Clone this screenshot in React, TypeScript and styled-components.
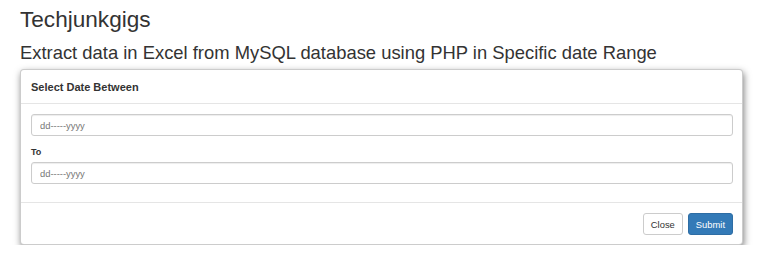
import styled, { createGlobalStyle } from 'styled-components';

const GlobalStyle = createGlobalStyle`
  html, body {
    margin: 0;
    padding: 0;
    background: #fff;
    font-family: "Liberation Sans", Arial, sans-serif;
    color: #333;
  }
`;

const Page = styled.div`
  padding: 6px 25px 0 20px;
`;

const Title = styled.h1`
  margin: 0;
  font-size: 22.6px;
  font-weight: 400;
  line-height: 28px;
`;

const Subtitle = styled.h2`
  margin: 7px 0 0;
  font-size: 18.4px;
  font-weight: 400;
  line-height: 24px;
`;

const Modal = styled.div`
  margin-top: 4px;
  border: 1px solid rgba(0, 0, 0, 0.2);
  border-radius: 4px;
  background: #fff;
  box-shadow: 1px 3px 7px rgba(0, 0, 0, 0.5);
`;

const Header = styled.div`
  height: 34px;
  padding: 0 10px;
  display: flex;
  align-items: center;
  border-bottom: 1px solid #e5e5e5;
  box-sizing: border-box;
`;

const HeaderTitle = styled.h4`
  margin: 0;
  font-size: 11px;
  font-weight: 700;
`;

const Body = styled.div`
  padding: 10px 9px 18px 10px;
`;

const Field = styled.input`
  display: block;
  width: 100%;
  height: 22px;
  box-sizing: border-box;
  padding: 0 8px;
  border: 1px solid #ccc;
  border-radius: 3px;
  font-family: inherit;
  font-size: 9.4px;
  color: #555;
  box-shadow: inset 0 1px 1px rgba(0, 0, 0, 0.075);
  outline: none;
  &::placeholder {
    color: #777;
  }
`;

const Label = styled.label`
  display: block;
  margin: 11px 0 5px;
  font-size: 9px;
  font-weight: 700;
  line-height: 10px;
`;

const Footer = styled.div`
  padding: 10px 9px 9px;
  display: flex;
  justify-content: flex-end;
  gap: 5px;
  border-top: 1px solid #e5e5e5;
`;

const Button = styled.button<{ $primary?: boolean }>`
  height: 22px;
  padding: 0 7px;
  border-radius: 3px;
  font-family: inherit;
  font-size: 9.4px;
  cursor: pointer;
  border: 1px solid ${(p) => (p.$primary ? '#2e6da4' : '#ccc')};
  background: ${(p) => (p.$primary ? '#337ab7' : '#fff')};
  color: ${(p) => (p.$primary ? '#fff' : '#333')};
`;

export default function App() {
  return (
    <>
      <GlobalStyle />
      <Page>
        <Title>Techjunkgigs</Title>
        <Subtitle>Extract data in Excel from MySQL database using PHP in Specific date Range</Subtitle>
        <Modal>
          <Header>
            <HeaderTitle>Select Date Between</HeaderTitle>
          </Header>
          <Body>
            <Field placeholder="dd-----yyyy" />
            <Label>To</Label>
            <Field placeholder="dd-----yyyy" />
          </Body>
          <Footer>
            <Button>Close</Button>
            <Button $primary>Submit</Button>
          </Footer>
        </Modal>
      </Page>
    </>
  );
}
